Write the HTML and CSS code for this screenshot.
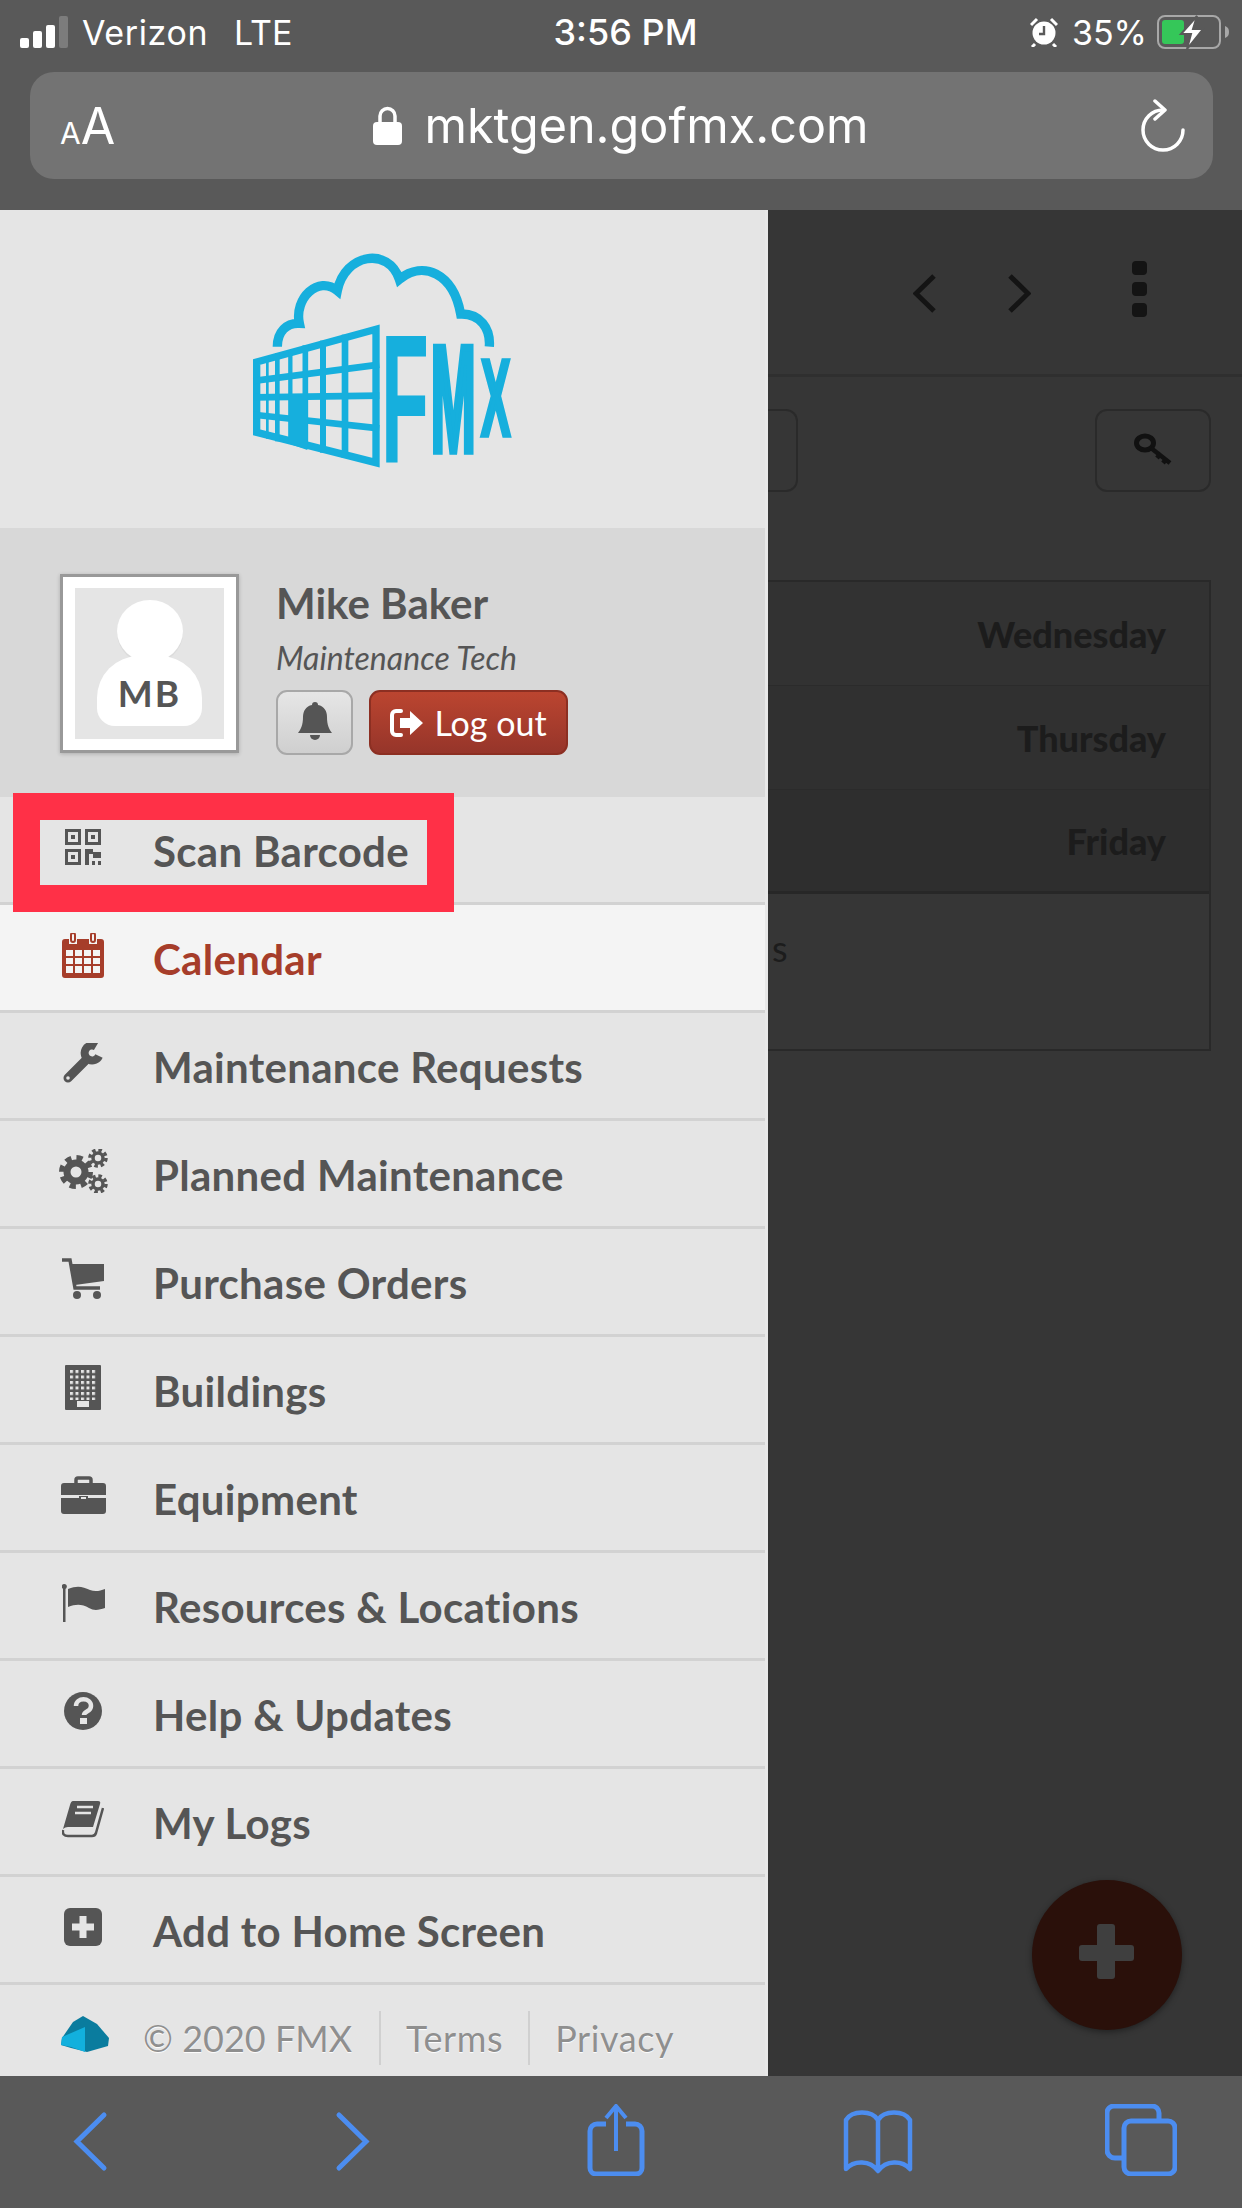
FILE: index.html
```html
<!DOCTYPE html>
<html lang="en">
<head>
    <meta charset="UTF-8">
    <meta name="viewport" content="width=device-width, initial-scale=1.0">
    <title>FMX Calendar</title>
    <link rel="stylesheet" href="styles.css">
</head>
<body>
    <header class="browser-top">
        <div class="status-bar">
            <div class="status-left">
                <div class="signal">
                    <span class="signal-1"></span><span class="signal-2"></span><span class="signal-3"></span><span class="signal-4"></span>
                </div>
                <span class="carrier">Verizon</span>
                <span class="network">LTE</span>
            </div>
            <div class="status-time">3:56 PM</div>
            <div class="status-right">
                <svg class="alarm" width="28" height="30" viewBox="0 0 28 30">
                    <circle cx="14" cy="16" r="11.5" fill="#fff"/>
                    <path d="M14 9v8h-5" fill="none" stroke="#595959" stroke-width="2.4"/>
                    <path d="M1 8l6-6M27 8l-6-6M5 27l-3 3M23 27l3 3" stroke="#fff" stroke-width="3"/>
                </svg>
                <span class="battery-text">35%</span>
                <svg class="battery" width="74" height="34" viewBox="0 0 74 34">
                    <rect x="1" y="1" width="62" height="32" rx="7" fill="none" stroke="#a8a8a8" stroke-width="2"/>
                    <rect x="5" y="5" width="22" height="24" rx="3" fill="#35c759"/>
                    <path d="M40 1L24 19h10l-4 15 16-20H36z" fill="#fff" stroke="#595959" stroke-width="2"/>
                    <path d="M68 11c3 1 4 3 4 6s-1 5-4 6z" fill="#a8a8a8"/>
                </svg>
            </div>
        </div>
        <div class="url-bar">
            <div class="url-aa"><span class="aa-small">A</span><span class="aa-big">A</span></div>
            <div class="url-site">
                <svg width="29" height="39" viewBox="0 0 29 39">
                    <path d="M7 18V10a7.500 7.500 0 0 1 15 0v8" fill="none" stroke="#fff" stroke-width="3.500"/>
                    <rect x="0" y="16" width="29" height="23" rx="4" fill="#fff"/>
                </svg>
                <span>mktgen.gofmx.com</span>
            </div>
            <svg class="reload" width="46" height="54" viewBox="0 0 46 54">
                <path d="M23 11A20 20 0 1 0 43 31" fill="none" stroke="#fff" stroke-width="3.500" stroke-linecap="round"/>
                <path d="M15 2l10 9-10 9" fill="none" stroke="#fff" stroke-width="3.500" stroke-linecap="round" stroke-linejoin="round"/>
            </svg>
        </div>
    </header>

    <div class="main">
        <nav class="drawer">
            <div class="logo-area">
                <svg class="logo" width="320" height="260" viewBox="0 0 960 780">
                    <path class="logo-line" d="M172 350C172 305 200 278 238 280C222 205 295 135 352 182C375 70 505 50 538 148C610 90 700 130 722 252C780 250 812 295 808 350"/>
                    <polygon class="logo-wall" points="110,396 468,298 468,698 110,607"/>
                    <g class="logo-bars">
                        <line x1="100" y1="453" x2="478" y2="404" stroke-width="20"/>
                        <line x1="100" y1="502" x2="478" y2="497" stroke-width="20"/>
                        <line x1="100" y1="554" x2="478" y2="595" stroke-width="20"/>
                        <line x1="142" y1="380" x2="142" y2="626" stroke-width="8"/>
                        <line x1="172" y1="370" x2="172" y2="634" stroke-width="14"/>
                        <line x1="211" y1="360" x2="211" y2="642" stroke-width="13"/>
                        <line x1="256" y1="346" x2="256" y2="654" stroke-width="17"/>
                        <line x1="309" y1="332" x2="309" y2="668" stroke-width="18"/>
                        <line x1="375" y1="314" x2="375" y2="684" stroke-width="20"/>
                    </g>
                    <polygon class="logo-fill" points="210,500 262,497 262,660 210,642"/>
                    <text class="logo-text" transform="translate(483 695) scale(2.35 5.5)">F</text>
                    <text class="logo-text logo-text-thick" transform="translate(632 662) scale(1.62 4.5)">M</text>
                    <text class="logo-text logo-text-thick" transform="translate(784 615) scale(1.3 3.2)">X</text>
                </svg>
            </div>

            <div class="profile">
                <div class="avatar">
                    <div class="avatar-inner">
                        <div class="avatar-head"></div>
                        <div class="avatar-body">MB</div>
                    </div>
                </div>
                <div class="profile-info">
                    <div class="profile-name">Mike Baker</div>
                    <div class="profile-role">Maintenance Tech</div>
                    <div class="profile-buttons">
                        <button class="bell-button">
                            <svg width="34" height="38" viewBox="0 0 34 38">
                                <path d="M17 0c2 0 3 1 3 3 6 1 9 6 9 12 0 8 2 12 5 16H0c3-4 5-8 5-16 0-6 3-11 9-12 0-2 1-3 3-3z" fill="#555"/>
                                <path d="M12 33a5 5 0 0 0 10 0z" fill="#555"/>
                            </svg>
                        </button>
                        <button class="logout-button">
                            <svg width="34" height="30" viewBox="0 0 34 30">
                                <path d="M11 3H6a4 4 0 0 0-4 4v16a4 4 0 0 0 4 4h5" fill="none" stroke="#fff" stroke-width="4" stroke-linecap="round"/>
                                <path d="M10 10h10V3l13 12-13 12v-7H10z" fill="#fff"/>
                            </svg>
                            Log out
                        </button>
                    </div>
                </div>
            </div>

            <ul class="menu">
                <li class="menu-item">
                    <span class="menu-icon">
                        <svg width="36" height="36" viewBox="0 0 36 36">
                            <g fill="none" stroke="#555" stroke-width="3">
                                <rect x="1.500" y="1.500" width="13" height="13"/>
                                <rect x="21.500" y="1.500" width="13" height="13"/>
                                <rect x="1.500" y="21.500" width="13" height="13"/>
                            </g>
                            <g fill="#555">
                                <rect x="6" y="6" width="4" height="4"/>
                                <rect x="26" y="6" width="4" height="4"/>
                                <rect x="6" y="26" width="4" height="4"/>
                                <rect x="20" y="20" width="4" height="16"/>
                                <rect x="24" y="20" width="4" height="5"/>
                                <rect x="28" y="23" width="8" height="6"/>
                                <rect x="27" y="32" width="3" height="4"/>
                                <rect x="33" y="32" width="3" height="4"/>
                            </g>
                        </svg>
                    </span>
                    Scan Barcode
                </li>
                <li class="menu-item menu-active">
                    <span class="menu-icon">
                        <svg width="42" height="45" viewBox="0 0 42 45">
                            <path d="M3 6h4v5h8V6h12v5h8V6h4a3 3 0 0 1 3 3v33a3 3 0 0 1-3 3H3a3 3 0 0 1-3-3V9a3 3 0 0 1 3-3z" fill="#a63d2a"/>
                            <rect x="9" y="0" width="4" height="9" rx="2" fill="none" stroke="#a63d2a" stroke-width="2"/>
                            <rect x="29" y="0" width="4" height="9" rx="2" fill="none" stroke="#a63d2a" stroke-width="2"/>
                            <g fill="#f4f4f4">
                                <rect x="4" y="17" width="7" height="6"/><rect x="13" y="17" width="7" height="6"/><rect x="22" y="17" width="7" height="6"/><rect x="31" y="17" width="7" height="6"/>
                                <rect x="4" y="25" width="7" height="6"/><rect x="13" y="25" width="7" height="6"/><rect x="22" y="25" width="7" height="6"/><rect x="31" y="25" width="7" height="6"/>
                                <rect x="4" y="33" width="7" height="7"/><rect x="13" y="33" width="7" height="7"/><rect x="22" y="33" width="7" height="7"/><rect x="31" y="33" width="7" height="7"/>
                            </g>
                        </svg>
                    </span>
                    Calendar
                </li>
                <li class="menu-item">
                    <span class="menu-icon">
                        <svg width="42" height="41" viewBox="0 0 42 41">
                            <path d="M6 35L23 18" stroke="#555" stroke-width="9" stroke-linecap="round"/>
                            <path d="M34 3.500A7.500 7.500 0 1 0 37 13" fill="none" stroke="#555" stroke-width="8"/>
                            <circle cx="6" cy="35" r="1.800" fill="#e5e5e5"/>
                        </svg>
                    </span>
                    Maintenance Requests
                </li>
                <li class="menu-item">
                    <span class="menu-icon">
                        <svg width="49" height="44" viewBox="0 0 49 44">
                            <g fill="none" stroke="#555">
                                <circle cx="17" cy="23" r="9" stroke-width="7"/>
                                <circle cx="17" cy="23" r="14" stroke-width="6" stroke-dasharray="6 5"/>
                                <circle cx="39" cy="9" r="5" stroke-width="3.500"/>
                                <circle cx="39" cy="9" r="8" stroke-width="3.500" stroke-dasharray="3.500 2.800"/>
                                <circle cx="39" cy="35" r="5" stroke-width="3.500"/>
                                <circle cx="39" cy="35" r="8" stroke-width="3.500" stroke-dasharray="3.500 2.800"/>
                            </g>
                        </svg>
                    </span>
                    Planned Maintenance
                </li>
                <li class="menu-item">
                    <span class="menu-icon">
                        <svg width="42" height="42" viewBox="0 0 42 42">
                            <path d="M0 2h8l5 28h25" fill="none" stroke="#555" stroke-width="3.500"/>
                            <polygon points="9,6 42,6 42,23 13,27" fill="#555"/>
                            <circle cx="15" cy="37" r="4" fill="#555"/>
                            <circle cx="35" cy="37" r="4" fill="#555"/>
                        </svg>
                    </span>
                    Purchase Orders
                </li>
                <li class="menu-item">
                    <span class="menu-icon">
                        <svg width="36" height="45" viewBox="0 0 36 45">
                            <defs>
                                <pattern id="win" width="5.500" height="5.500" patternUnits="userSpaceOnUse" x="5" y="5">
                                    <rect width="3" height="3" fill="#e5e5e5"/>
                                </pattern>
                            </defs>
                            <rect width="36" height="45" rx="1" fill="#555"/>
                            <rect x="5" y="5" width="27" height="30" fill="url(#win)"/>
                            <rect x="12" y="36" width="12" height="6" fill="#e5e5e5"/>
                        </svg>
                    </span>
                    Buildings
                </li>
                <li class="menu-item">
                    <span class="menu-icon">
                        <svg width="45" height="38" viewBox="0 0 45 38">
                            <path d="M15 9V4a2 2 0 0 1 2-2h11a2 2 0 0 1 2 2v5" fill="none" stroke="#555" stroke-width="3.500"/>
                            <path d="M3 7h39a3 3 0 0 1 3 3v9H0v-9a3 3 0 0 1 3-3zM0 22h18v3h9v-3h18v13a3 3 0 0 1-3 3H3a3 3 0 0 1-3-3z" fill="#555"/>
                            <rect x="18" y="20" width="9" height="5" fill="#555"/>
                            <rect x="20" y="21" width="5" height="2" fill="#e5e5e5"/>
                        </svg>
                    </span>
                    Equipment
                </li>
                <li class="menu-item">
                    <span class="menu-icon">
                        <svg width="43" height="38" viewBox="0 0 43 38">
                            <rect x="1" y="3" width="2.500" height="35" fill="#555"/>
                            <circle cx="2.300" cy="2.500" r="2.500" fill="#555"/>
                            <path d="M6 5c10-4 15-2 22 1 5 2 10 1 15-1v19c-6 2-11 3-16 0-7-4-13-4-21-1z" fill="#555"/>
                        </svg>
                    </span>
                    Resources &amp; Locations
                </li>
                <li class="menu-item">
                    <span class="menu-icon">
                        <svg width="38" height="38" viewBox="0 0 38 38">
                            <circle cx="19" cy="19" r="19" fill="#555"/>
                            <path d="M12 14c0-9 15-9 15 0 0 6-7 5-7 9" fill="none" stroke="#e5e5e5" stroke-width="4.500"/>
                            <rect x="16" y="26" width="7" height="6" fill="#e5e5e5"/>
                        </svg>
                    </span>
                    Help &amp; Updates
                </li>
                <li class="menu-item">
                    <span class="menu-icon">
                        <svg width="42" height="38" viewBox="0 0 42 38">
                            <path d="M11 1H36q3 0 2 3L31 27H6q-3 0-5 2L8 5q1-4 3-4z" fill="#555"/>
                            <path d="M1 30q-1 6 5 6H30q3 0 4-3L41 8" fill="none" stroke="#555" stroke-width="2.500"/>
                            <path d="M15 7H31M13 13H29" stroke="#e5e5e5" stroke-width="2.500"/>
                        </svg>
                    </span>
                    My Logs
                </li>
                <li class="menu-item">
                    <span class="menu-icon">
                        <svg width="38" height="38" viewBox="0 0 38 38">
                            <rect width="38" height="38" rx="6" fill="#555"/>
                            <path d="M19 8v22M8 19h22" stroke="#e5e5e5" stroke-width="7"/>
                        </svg>
                    </span>
                    Add to Home Screen
                </li>
                <li class="annotation"></li>
            </ul>

            <footer class="drawer-footer">
                <svg class="dome" width="48" height="36" viewBox="0 0 48 36">
                    <path d="M22 0l14 8 12 14-1 8-21 6-16-4-10-3 1-7L12 6z" fill="#0a7c9e"/>
                    <path d="M1 21L24 11v25l-14-5-10-2z" fill="#12b0dd"/>
                </svg>
                <span class="footer-copy">© 2020 FMX</span>
                <span class="footer-link">Terms</span>
                <span class="footer-link">Privacy</span>
            </footer>
        </nav>

        <section class="page">
            <div class="page-nav">
                <svg class="nav-back" width="23" height="39" viewBox="0 0 23 39"><path d="M21 2L3 19.500 21 37" fill="none" stroke="#141414" stroke-width="5"/></svg>
                <svg class="nav-next" width="23" height="39" viewBox="0 0 23 39"><path d="M2 2L20 19.500 2 37" fill="none" stroke="#141414" stroke-width="5"/></svg>
                <div class="page-dots"><span></span><span></span><span></span></div>
            </div>
            <div class="page-tools">
                <div class="tool-button tool-cut"></div>
                <div class="tool-button tool-key">
                    <svg width="38" height="36" viewBox="0 0 38 36">
                        <ellipse cx="11" cy="10" rx="8.500" ry="7" fill="none" stroke="#111" stroke-width="5"/>
                        <path d="M17 15l19 15M27 20l-4 5M33 25l-4 5" stroke="#111" stroke-width="4.500" fill="none"/>
                    </svg>
                </div>
            </div>
            <div class="week-table">
                <div class="week-row row-wed">Wednesday</div>
                <div class="week-row row-thu">Thursday</div>
                <div class="week-row row-fri">Friday</div>
                <div class="week-note">s</div>
            </div>
            <div class="fab"></div>
        </section>
    </div>

    <footer class="browser-bottom">
        <svg width="72" height="72" viewBox="0 0 72 72"><path d="M50 11L23 37.500 50 64" fill="none" stroke="#4c8df0" stroke-width="5" stroke-linecap="round"/></svg>
        <svg width="72" height="72" viewBox="0 0 72 72"><path d="M22 11L49 37.500 22 64" fill="none" stroke="#4c8df0" stroke-width="5" stroke-linecap="round"/></svg>
        <svg width="72" height="72" viewBox="0 0 72 72">
            <path d="M26 20h-9a7 7 0 0 0-7 7v37a6 6 0 0 0 6 6h40a6 6 0 0 0 6-6V27a7 7 0 0 0-7-7h-9" fill="none" stroke="#4c8df0" stroke-width="5"/>
            <path d="M36 47V2M26 14L36 2l10 12" fill="none" stroke="#4c8df0" stroke-width="4"/>
        </svg>
        <svg width="72" height="72" viewBox="0 0 72 72">
            <path d="M36 16C30 6 10 6 4 16v49c8-9 24-9 32 2 8-11 24-11 32-2V16C62 6 42 6 36 16zM36 16v51" fill="none" stroke="#4c8df0" stroke-width="4.500" stroke-linejoin="round"/>
        </svg>
        <svg width="72" height="72" viewBox="0 0 72 72">
            <path d="M18 54h-8a8 8 0 0 1-8-8V9a7 7 0 0 1 7-7h38a7 7 0 0 1 7 7v8" fill="none" stroke="#4c8df0" stroke-width="5"/>
            <rect x="19" y="17" width="51" height="53" rx="7" fill="none" stroke="#4c8df0" stroke-width="5"/>
        </svg>
    </footer>
</body>
</html>
```

FILE: styles.css
```css
body {
    margin: 0;
    padding: 0;
    width: 1242px;
    height: 2208px;
    overflow: hidden;
    background-color: #363636;
    font-family: 'Lato', sans-serif;
    color: #555555;
}

.browser-top {
    height: 210px;
    background-color: #595959;
    color: #ffffff;
    font-family: 'Inter', sans-serif;
}

.status-bar {
    height: 72px;
    display: grid;
    grid-template-columns: 1fr auto 1fr;
    align-items: center;
    padding: 0 11px 8px 20px;
    box-sizing: border-box;
    font-size: 34px;
}

.status-left {
    display: flex;
    align-items: center;
}

.signal {
    display: flex;
    align-items: flex-end;
    gap: 4px;
    height: 32px;
    margin-right: 14px;
}

.signal span {
    width: 9px;
    border-radius: 2px;
    background-color: #ffffff;
}

.signal-1 { height: 10px; }
.signal-2 { height: 17px; }
.signal-3 { height: 23px; }
.signal-4 { height: 32px; background-color: #7c7c7c !important; }

.carrier {
    margin-right: 26px;
    letter-spacing: 0.6px;
}

.status-time {
    font-size: 36px;
    font-weight: 500;
}

.status-right {
    display: flex;
    align-items: center;
    justify-content: flex-end;
    gap: 10px;
}

.alarm {
    margin-right: 4px;
}

.url-bar {
    height: 107px;
    margin: 0 29px 0 30px;
    padding: 0 27px 0 30px;
    display: flex;
    align-items: center;
    justify-content: space-between;
    background-color: #737373;
    border-radius: 24px;
}

.url-aa {
    display: flex;
    align-items: baseline;
    width: 58px;
}

.aa-small { font-size: 30px; }
.aa-big { font-size: 50px; }

.url-site {
    display: flex;
    align-items: center;
    gap: 22px;
    margin-right: 16px;
    font-size: 48.5px;
}

.main {
    height: 1866px;
    display: flex;
}

.drawer {
    width: 768px;
    flex-shrink: 0;
    box-sizing: border-box;
    border-right: 3px solid #e8e8e8;
    background-color: #e5e5e5;
    overflow: hidden;
    display: flex;
    flex-direction: column;
}

.logo-area {
    height: 318px;
    box-sizing: border-box;
    padding: 20px 0 0 220px;
    flex-shrink: 0;
}

.logo {
    display: block;
    overflow: visible;
}

.logo-line {
    fill: none;
    stroke: #16afdd;
    stroke-width: 28;
}

.logo-wall {
    fill: #e5e5e5;
    stroke: #16afdd;
    stroke-width: 22;
}

.logo-bars line {
    stroke: #16afdd;
}

.logo-fill {
    fill: #16afdd;
}

.logo-text {
    font-family: 'Liberation Sans', sans-serif;
    font-weight: bold;
    font-size: 100px;
    fill: #16afdd;
}

.logo-text-thick {
    stroke: #16afdd;
    stroke-width: 5;
}

.profile {
    height: 269px;
    flex-shrink: 0;
    box-sizing: border-box;
    padding: 46px 60px 0;
    display: flex;
    gap: 37px;
    background-color: #d8d8d8;
}

.avatar {
    width: 179px;
    height: 179px;
    box-sizing: border-box;
    border: 3px solid #999999;
    padding: 11px 12px;
    background-color: #ffffff;
    box-shadow: 0 1px 4px rgba(0, 0, 0, 0.2);
}

.avatar-inner {
    height: 100%;
    background-color: #e5e5e5;
    display: flex;
    flex-direction: column;
    align-items: center;
}

.avatar-head {
    width: 66px;
    height: 62px;
    margin-top: 12px;
    border-radius: 50%;
    background-color: #ffffff;
    box-shadow: 0 2px 0 #dcdcdc;
}

.avatar-body {
    width: 105px;
    height: 70px;
    margin-top: -6px;
    padding-top: 4px;
    box-sizing: border-box;
    border-radius: 42px 42px 18px 18px;
    background-color: #ffffff;
    font-size: 37px;
    font-weight: bold;
    letter-spacing: 2px;
    line-height: 66px;
    text-align: center;
}

.profile-info {
    padding-top: 2px;
}

.profile-name {
    font-size: 42px;
    font-weight: bold;
    line-height: 54px;
}

.profile-role {
    font-size: 32px;
    font-style: italic;
    line-height: 42px;
    margin-top: 7px;
}

.profile-buttons {
    display: flex;
    gap: 16px;
    margin-top: 11px;
}

.profile-buttons button {
    height: 65px;
    box-sizing: border-box;
    border-radius: 11px;
    font-family: inherit;
    padding: 0;
}

.bell-button {
    width: 77px;
    border: 2px solid #a8a8a8;
    background: linear-gradient(#e6e6e6, #cfcfcf);
}

.logout-button {
    width: 199px;
    border: 2px solid #8c2f22;
    background: linear-gradient(#bb4530, #96352a);
    color: #ffffff;
    font-size: 34px;
    display: flex;
    align-items: center;
    justify-content: center;
    gap: 10px;
}

.menu {
    list-style: none;
    margin: 0;
    padding: 0;
    position: relative;
    flex-shrink: 0;
}

.menu-item {
    height: 108px;
    box-sizing: border-box;
    border-bottom: 3px solid #d2d2d2;
    display: flex;
    align-items: center;
    padding: 2px 0 0 24px;
    font-size: 42px;
    font-weight: bold;
    letter-spacing: 0.3px;
}

.menu-active {
    background-color: #f4f4f4;
    color: #a63d2a;
}

.menu-icon {
    width: 118px;
    margin-right: 11px;
    display: flex;
    justify-content: center;
    margin-top: -7px;
}

.annotation {
    position: absolute;
    top: -4px;
    left: 13px;
    width: 441px;
    height: 119px;
    box-sizing: border-box;
    border: 27px solid #ff3047;
}

.drawer-footer {
    flex: 1;
    display: flex;
    align-items: center;
    padding: 14px 0 0 61px;
    font-size: 36px;
    color: #8f8f8f;
    text-shadow: 0 1px 1px #ffffff;
}

.dome {
    margin-right: 34px;
    margin-top: -8px;
}

.footer-copy {
    padding-right: 27px;
}

.footer-link {
    height: 54px;
    line-height: 54px;
    padding: 0 25px;
    border-left: 2px solid #d0d0d0;
    letter-spacing: 0.6px;
}

.page {
    flex: 1;
    position: relative;
    overflow: hidden;
    color: #1c1c1c;
}

.page-nav {
    height: 167px;
    box-sizing: border-box;
    border-bottom: 3px solid #2f2f2f;
    padding: 2px 0 0 145px;
    display: flex;
    align-items: center;
}

.nav-next {
    margin-left: 72px;
}

.page-dots {
    display: flex;
    flex-direction: column;
    gap: 7px;
    margin-top: -8px;
    margin-left: 101px;
}

.page-dots span {
    width: 15px;
    height: 14px;
    border-radius: 4px;
    background-color: #141414;
}

.page-tools {
    height: 203px;
    box-sizing: border-box;
    padding: 32px 31px 0 0;
    display: flex;
    justify-content: space-between;
    align-items: flex-start;
}

.tool-button {
    height: 83px;
    box-sizing: border-box;
    border: 2px solid #2a2a2a;
    border-radius: 12px;
    display: flex;
    align-items: center;
    justify-content: center;
}

.tool-cut {
    width: 30px;
    border-left: none;
    border-radius: 0 12px 12px 0;
}

.tool-key {
    width: 116px;
}

.week-table {
    margin-right: 31px;
    border: 2px solid #292929;
    border-left: none;
    font-size: 36px;
}

.week-row {
    height: 104px;
    box-sizing: border-box;
    padding: 0 43px 0 0;
    display: flex;
    align-items: center;
    justify-content: flex-end;
    font-weight: 900;
    border-bottom: 1px solid #2b2b2b;
}

.row-wed { background-color: #323232; }
.row-thu { background-color: #303030; }
.row-fri { background-color: #2e2e2e; border-bottom: 3px solid #272727; }

.week-note {
    height: 155px;
    padding: 32px 0 0 4px;
    box-sizing: border-box;
}

.fab {
    position: absolute;
    right: 60px;
    bottom: 46px;
    width: 150px;
    height: 150px;
    border-radius: 50%;
    background-color: #2a100a;
    box-shadow: 0 2px 6px rgba(0, 0, 0, 0.4);
}

.fab::before,
.fab::after {
    content: "";
    position: absolute;
    background-color: #3f3f3f;
    border-radius: 3px;
}

.fab::before {
    left: 47px;
    top: 65px;
    width: 55px;
    height: 16px;
}

.fab::after {
    left: 65px;
    top: 44px;
    width: 18px;
    height: 55px;
}

.browser-bottom {
    height: 132px;
    box-sizing: border-box;
    padding: 28px 65px 0 54px;
    display: flex;
    justify-content: space-between;
    align-items: flex-start;
    background-color: #595959;
}
```
